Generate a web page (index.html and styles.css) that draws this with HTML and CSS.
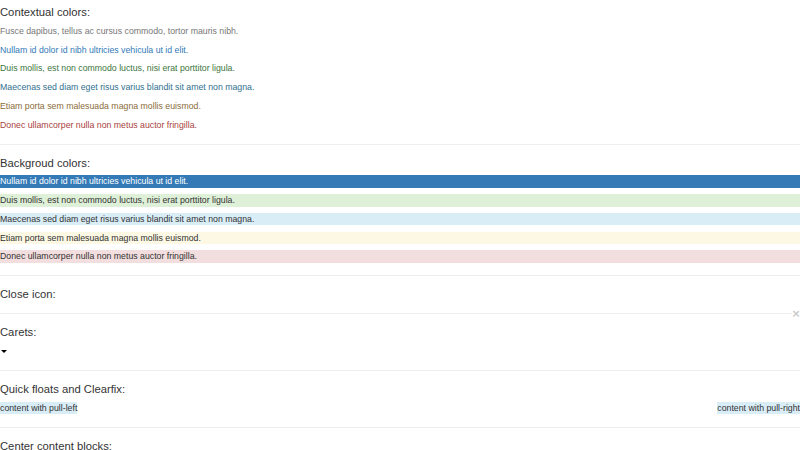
FILE: index.html
```html
<!DOCTYPE html>
<html lang="en">
<head>
    <meta charset="UTF-8">
    <meta name="viewport" content="width=device-width, initial-scale=1.0">
    <title>Helper classes</title>
    <link rel="stylesheet" href="styles.css">
</head>
<body>

<div class="helpers">
    <!-- Contextual colors -->
    <h4>Contextual colors:</h4>
    <p class="text-muted">Fusce dapibus, tellus ac cursus commodo, tortor mauris nibh.</p>
    <p class="text-primary">Nullam id dolor id nibh ultricies vehicula ut id elit.</p>
    <p class="text-success">Duis mollis, est non commodo luctus, nisi erat porttitor ligula.</p>
    <p class="text-info">Maecenas sed diam eget risus varius blandit sit amet non magna.</p>
    <p class="text-warning">Etiam porta sem malesuada magna mollis euismod.</p>
    <p class="text-danger">Donec ullamcorper nulla non metus auctor fringilla.</p>

    <hr>

    <!-- Background colors -->
    <h4>Backgroud colors:</h4>
    <p class="bg-primary">Nullam id dolor id nibh ultricies vehicula ut id elit.</p>
    <p class="bg-success">Duis mollis, est non commodo luctus, nisi erat porttitor ligula.</p>
    <p class="bg-info">Maecenas sed diam eget risus varius blandit sit amet non magna.</p>
    <p class="bg-warning">Etiam porta sem malesuada magna mollis euismod.</p>
    <p class="bg-danger">Donec ullamcorper nulla non metus auctor fringilla.</p>

    <hr>

    <!-- Close icon -->
    <h4>Close icon:</h4>
    <button type="button" class="close" aria-label="Close">&times;</button>

    <hr>

    <!-- Carets -->
    <h4>Carets:</h4>
    <p><span class="caret"></span></p>

    <hr>

    <!-- Floats -->
    <h4>Quick floats and Clearfix:</h4>
    <div class="clearfix">
        <div class="pull-left bg-info">content with pull-left</div>
        <div class="pull-right bg-info">content with pull-right</div>
    </div>

    <hr>

    <h4>Center content blocks:</h4>
    <div class="center-block bg-info">content with center-block</div>
</div>

</body>
</html>
```

FILE: styles.css
```css
body {
    font-family: "Liberation Sans", Arial, sans-serif;
    font-size: 8.75px;
    line-height: 12.5px;
    color: #333;
    background-color: #fff;
    margin: 0;
}
.helpers {
    width: 800px;
}
h4 {
    font-size: 11.25px;
    font-weight: 500;
    line-height: 1.1;
    margin: 6.25px 0;
}
p {
    margin: 0 0 6.25px;
}
/* the line is thinner than 1px in the original, so take it back from the margin */
hr {
    margin: 12.5px 0 12.1px;
    border: 0;
    border-top: 1px solid #eee;
    height: 0;
}
.text-muted { color: #777; }
.text-primary { color: #337ab7; }
.text-success { color: #3c763d; }
.text-info { color: #31708f; }
.text-warning { color: #8a6d3b; }
.text-danger { color: #a94442; }
.bg-primary {
    background-color: #337ab7;
    color: #fff;
}
.bg-success { background-color: #dff0d8; }
.bg-info { background-color: #d9edf7; }
.bg-warning { background-color: #fcf8e3; }
.bg-danger { background-color: #f2dede; }
.close {
    float: right;
    padding: 0;
    border: 0;
    background: transparent;
    font-family: "Liberation Sans", Arial, sans-serif;
    font-size: 13.125px;
    font-weight: bold;
    line-height: 1;
    color: #000;
    opacity: .2;
    cursor: pointer;
}
.caret {
    display: inline-block;
    width: 0;
    height: 0;
    margin-left: 1.25px;
    vertical-align: middle;
    border-top: 3px solid #000;
    border-left: 3px solid transparent;
    border-right: 3px solid transparent;
}
.pull-left { float: left; }
.pull-right { float: right; }
.clearfix::after {
    content: "";
    display: table;
    clear: both;
}
.center-block {
    display: block;
    width: 200px;
    margin: 10px auto 0;
}
```
